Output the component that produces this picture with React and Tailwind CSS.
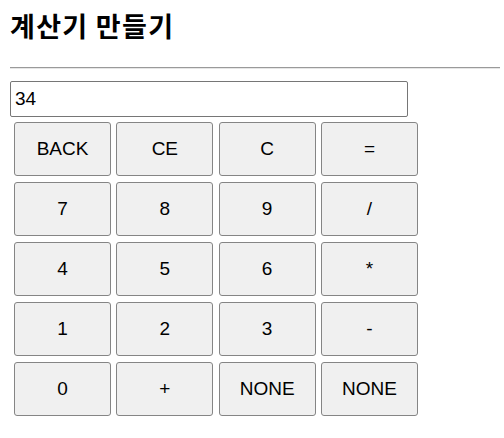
const rows = [
  ['BACK', 'CE', 'C', '='],
  ['7', '8', '9', '/'],
  ['4', '5', '6', '*'],
  ['1', '2', '3', '-'],
  ['0', '+', 'NONE', 'NONE'],
];

export default function App() {
  return (
    <div className="px-[10px] pt-[7px] bg-white min-h-[438px] font-['Liberation_Sans',Arial,sans-serif] text-black">
      <h1 className="text-[27px] leading-[38px] font-bold font-['Noto_Sans_CJK_KR','Liberation_Sans',sans-serif] tracking-[1.3px]">
        계산기 만들기
      </h1>
      <div className="mt-[22px] h-[2px] border-t border-t-[#9a9a9a] border-b border-b-[#e6e6e6] w-[490px]" />
      <div className="mt-[12px] w-[398px] h-[36px] border border-[#767676] rounded-[2px] flex items-center px-[4px] text-[19px]">
        34
      </div>
      <div className="mt-[5px] ml-[4px] w-[404px] grid grid-cols-4 gap-x-[5.33px] gap-y-[6px]">
        {rows.flat().map((b, j) => (
          <button
            key={j}
            className="h-[54px] bg-[#f0f0f0] border border-[#858585] rounded-[3px] text-[19px] flex items-center justify-center"
          >
            {b}
          </button>
        ))}
      </div>
    </div>
  );
}
